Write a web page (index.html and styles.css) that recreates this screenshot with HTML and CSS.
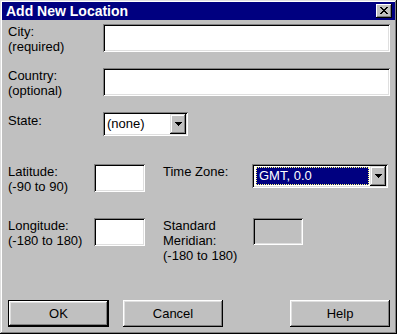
FILE: index.html
```html
<!DOCTYPE html>
<html>
<head>
<meta charset="utf-8">
<title>Add New Location</title>
<link rel="stylesheet" href="styles.css">
</head>
<body>
<div class="window">
  <div class="titlebar">
    <span class="title">Add New Location</span>
    <span class="close">
      <svg width="8" height="7" viewBox="0 0 8 7" shape-rendering="crispEdges">
        <path fill="#000" d="M0 0h2v1H0zM6 0h2v1H6zM1 1h2v1H1zM5 1h2v1H5zM2 2h4v1H2zM3 3h2v1H3zM2 4h4v1H2zM1 5h2v1H1zM5 5h2v1H5zM0 6h2v1H0zM6 6h2v1H6z"/>
      </svg>
    </span>
  </div>
  <div class="content">
    <div class="row">
      <div class="label">City:<br>(required)</div>
      <div class="field wide"></div>
    </div>
    <div class="row r2">
      <div class="label">Country:<br>(optional)</div>
      <div class="field wide"></div>
    </div>
    <div class="row r3">
      <div class="label lab-state">State:</div>
      <div class="select state">
        <span class="value">(none)</span>
        <span class="arrow"><svg width="7" height="4" viewBox="0 0 7 4" shape-rendering="crispEdges"><path fill="#000" d="M0 0h7v1H0zM1 1h5v1H1zM2 2h3v1H2zM3 3h1v1H3z"/></svg></span>
      </div>
    </div>
    <div class="coords">
      <div class="clabel">Latitude:<br>(-90 to 90)</div>
      <div class="field small"></div>
      <div class="clabel second">Time Zone:</div>
      <div class="select tz">
        <span class="value"><span class="hl">GMT, 0.0</span></span>
        <span class="arrow"><svg width="7" height="4" viewBox="0 0 7 4" shape-rendering="crispEdges"><path fill="#000" d="M0 0h7v1H0zM1 1h5v1H1zM2 2h3v1H2zM3 3h1v1H3z"/></svg></span>
      </div>
      <div class="clabel">Longitude:<br>(-180 to 180)</div>
      <div class="field small"></div>
      <div class="clabel second">Standard<br>Meridian:<br>(-180 to 180)</div>
      <div class="field disabled"></div>
    </div>
    <div class="buttons">
      <div class="btn default"><span>OK</span></div>
      <div class="btn cancel">Cancel</div>
      <div class="btn help">Help</div>
    </div>
  </div>
</div>
</body>
</html>
```
FILE: styles.css
```css
* { box-sizing: border-box; }
html, body { margin: 0; padding: 0; }
body {
  font: 13px/15px "Liberation Sans", Arial, sans-serif;
  color: #000;
  background: #c0c0c0;
}
.window {
  width: 397px;
  height: 334px;
  background: #c0c0c0;
  padding: 2px;
  box-shadow: inset -1px -1px #000, inset 1px 1px #dfdfdf, inset -2px -2px #808080, inset 2px 2px #fff;
  display: flex;
  flex-direction: column;
}
.titlebar {
  height: 18px;
  background: #000080;
  color: #fff;
  font-weight: bold;
  font-size: 14px;
  display: flex;
  align-items: center;
  padding: 0 3px 0 4px;
}
.title { flex: 1; }
.close {
  width: 16px;
  height: 14px;
  background: #c0c0c0;
  box-shadow: inset -1px -1px #000, inset 1px 1px #fff, inset -2px -2px #808080;
  display: flex;
  align-items: center;
  justify-content: center;
  padding-bottom: 1px;
}
.close svg { display: block; }
.content {
  padding: 4px 4px 0 6px;
  display: flex;
  flex-direction: column;
}
.row { display: flex; }
.r2, .r3 { margin-top: 14px; }
.label { width: 95px; }
.lab-state { padding-top: 1px; }
.field {
  height: 28px;
  background: #fff;
  box-shadow: inset 1px 1px #808080, inset -1px -1px #fff, inset 2px 2px #000, inset -2px -2px #dfdfdf;
}
.wide { width: 287px; }
.small { width: 51px; }
.disabled {
  width: 50px;
  height: 27px;
  margin-left: 1px;
  background: #c0c0c0;
}
.select {
  height: 24px;
  display: flex;
  padding: 2px;
  background: #fff;
  box-shadow: inset 1px 1px #808080, inset -1px -1px #fff, inset 2px 2px #000, inset -2px -2px #dfdfdf;
}
.state { width: 85px; }
.tz { width: 136px; }
.value {
  flex: 1;
  padding-left: 2px;
  line-height: 20px;
  display: flex;
}
.tz .value { padding: 1px 1px 1px 2px; }
.hl {
  flex: 1;
  background: #000080;
  color: #fff;
  line-height: 16px;
  padding-left: 2px;
  border: 1px dotted #ffff80;
}
.arrow {
  width: 16px;
  height: 20px;
  background: #c0c0c0;
  box-shadow: inset -1px -1px #000, inset 1px 1px #dfdfdf, inset -2px -2px #808080, inset 2px 2px #fff;
  display: flex;
  align-items: center;
  justify-content: center;
}
.arrow svg { display: block; }
.coords {
  margin-top: 28px;
  display: grid;
  grid-template-columns: 86px 51px 107px 136px;
  grid-template-rows: 28px auto;
  row-gap: 26px;
  align-items: start;
}
.second { padding-left: 18px; }
.buttons {
  display: flex;
  margin-top: 37px;
}
.btn {
  width: 100px;
  height: 27px;
  display: flex;
  align-items: center;
  justify-content: center;
  background: #c0c0c0;
  box-shadow: inset -1px -1px #000, inset 1px 1px #fff, inset -2px -2px #808080, inset 2px 2px #dfdfdf;
}
.default {
  width: 101px;
  border: 1px solid #000;
}
.cancel { margin-left: 14px; }
.help { margin-left: auto; margin-right: 1px; }
```
